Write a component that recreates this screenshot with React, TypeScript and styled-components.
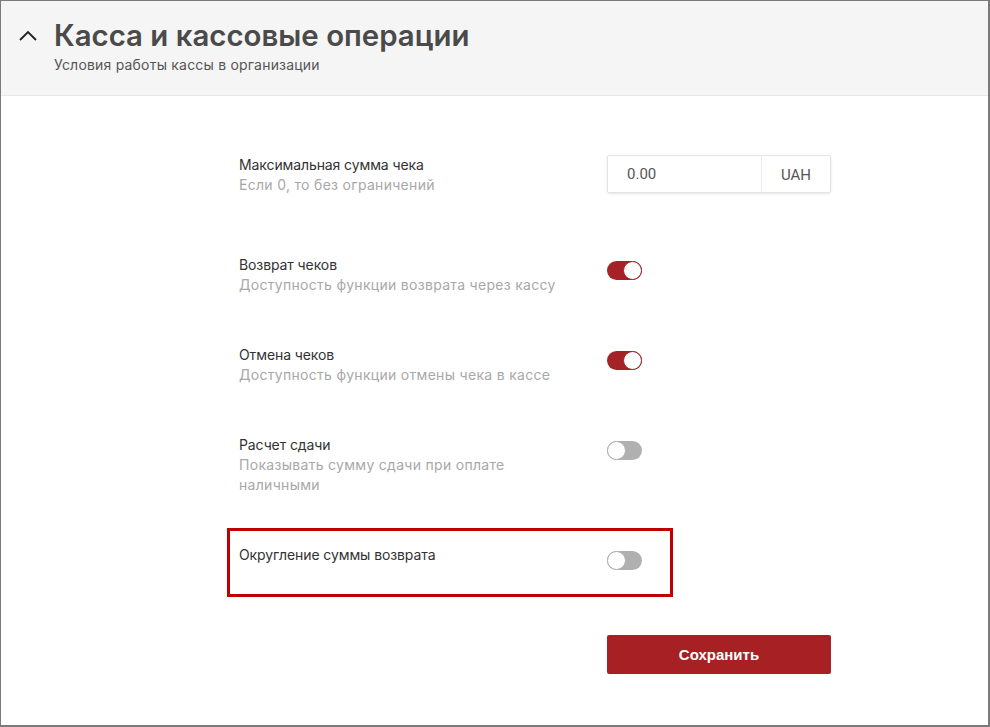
import React from "react";
import styled, { createGlobalStyle } from "styled-components";

const GlobalStyle = createGlobalStyle`
  html, body { margin: 0; padding: 0; background: #ffffff; }
  body { font-family: Inter, "Noto Sans", sans-serif; }
  * { box-sizing: border-box; }
`;

const Frame = styled.div`
  width: 990px;
  height: 727px;
  border-style: solid;
  border-color: #7a7a7a;
  border-width: 1px 2px 2px 1px;
  background: #ffffff;
  overflow: hidden;
`;

const Header = styled.header`
  height: 95px;
  background: #f5f5f5;
  border-bottom: 1px solid #e7e7e7;
  display: flex;
  align-items: flex-start;
  padding: 16px 0 0 17px;
  gap: 16px;
`;

const Chevron = styled.svg`
  width: 20px;
  height: 20px;
  margin-top: 9px;
  flex: none;
`;

const HeaderText = styled.div`
  display: flex;
  flex-direction: column;
`;

const Title = styled.h1`
  margin: 0;
  font-size: 29.4px;
  line-height: 38px;
  font-weight: 600;
  color: #4a4a4a;
`;

const Subtitle = styled.div`
  font-size: 14px;
  line-height: 18px;
  color: #555555;
  letter-spacing: 0.2px;
  margin-top: 1px;
`;

const Content = styled.main`
  padding: 59px 0 0 238px;
  display: flex;
  flex-direction: column;
  width: 831px;
`;

const Row = styled.div<{ $after?: number }>`
  position: relative;
  display: grid;
  grid-template-columns: 368px 224px;
  align-items: start;
  margin-bottom: ${(p) => p.$after ?? 50}px;
`;

const Highlight = styled.div`
  position: absolute;
  top: -17px;
  left: -12px;
  width: 446px;
  height: 69px;
  border: 3px solid #c00000;
  pointer-events: none;
`;

const LabelBlock = styled.div`
  max-width: 330px;
  display: flex;
  flex-direction: column;
`;

const Label = styled.div`
  font-size: 14px;
  line-height: 20px;
  color: #333333;
  letter-spacing: -0.1px;
`;

const Hint = styled.div`
  font-size: 14px;
  line-height: 20px;
  color: #a8a8a8;
  letter-spacing: 0.3px;
`;

const InputGroup = styled.div`
  display: flex;
  height: 38px;
  width: 224px;
  border: 1px solid #e4e4e4;
  border-radius: 2px;
  box-shadow: 0 1px 3px rgba(0, 0, 0, 0.1);
`;

const AmountInput = styled.input`
  flex: 1;
  min-width: 0;
  border: none;
  outline: none;
  padding: 0 0 0 19px;
  font-family: Roboto, "Liberation Sans", sans-serif;
  font-size: 15px;
  color: #555555;
  background: transparent;
`;

const Suffix = styled.div`
  width: 69px;
  border-left: 1px solid #ececec;
  display: flex;
  align-items: center;
  justify-content: center;
  font-family: Roboto, "Liberation Sans", sans-serif;
  font-size: 15px;
  color: #555555;
  padding-top: 2px;
`;

const Toggle = styled.div<{ $on: boolean }>`
  position: relative;
  width: 35px;
  height: 19px;
  margin-top: 6px;
  border-radius: 10px;
  background: ${(p) => (p.$on ? "#a52226" : "#b0b0b0")};
`;

const Knob = styled.div<{ $on: boolean }>`
  position: absolute;
  top: 0;
  left: ${(p) => (p.$on ? "16px" : "0")};
  width: 19px;
  height: 19px;
  border-radius: 50%;
  background: #ffffff;
  border: 1.5px solid ${(p) => (p.$on ? "#a52226" : "#b0b0b0")};
`;

const SaveButton = styled.button`
  grid-column: 2;
  width: 224px;
  height: 39px;
  border: none;
  border-radius: 2px;
  background: #a62024;
  color: #ffffff;
  font-family: "Liberation Sans", Arial, sans-serif;
  font-weight: 700;
  font-size: 15px;
  cursor: pointer;
`;

type Setting = {
  label: string;
  hint?: string;
  on: boolean;
  highlight?: boolean;
};

const settings: Setting[] = [
  { label: "Возврат чеков", hint: "Доступность функции возврата через кассу", on: true },
  { label: "Отмена чеков", hint: "Доступность функции отмены чека в кассе", on: true },
  { label: "Расчет сдачи", hint: "Показывать сумму сдачи при оплате наличными", on: false },
  { label: "Округление суммы возврата", on: false, highlight: true },
];

export default function App() {
  return (
    <>
      <GlobalStyle />
      <Frame>
        <Header>
          <Chevron viewBox="0 0 20 20">
            <path d="M2 14 L10 6 L18 14" fill="none" stroke="#222" strokeWidth="1.8" />
          </Chevron>
          <HeaderText>
            <Title>Касса и кассовые операции</Title>
            <Subtitle>Условия работы кассы в организации</Subtitle>
          </HeaderText>
        </Header>
        <Content>
          <Row $after={60}>
            <LabelBlock>
              <Label>Максимальная сумма чека</Label>
              <Hint>Если 0, то без ограничений</Hint>
            </LabelBlock>
            <InputGroup>
              <AmountInput defaultValue="0.00" />
              <Suffix>UAH</Suffix>
            </InputGroup>
          </Row>
          {settings.map((s, i) => (
            <Row key={s.label} $after={i === settings.length - 1 ? 65 : 50}>
              {s.highlight && <Highlight />}
              <LabelBlock>
                <Label>{s.label}</Label>
                {s.hint && <Hint>{s.hint}</Hint>}
              </LabelBlock>
              <Toggle $on={s.on}>
                <Knob $on={s.on} />
              </Toggle>
            </Row>
          ))}
          <Row>
            <SaveButton>Сохранить</SaveButton>
          </Row>
        </Content>
      </Frame>
    </>
  );
}
